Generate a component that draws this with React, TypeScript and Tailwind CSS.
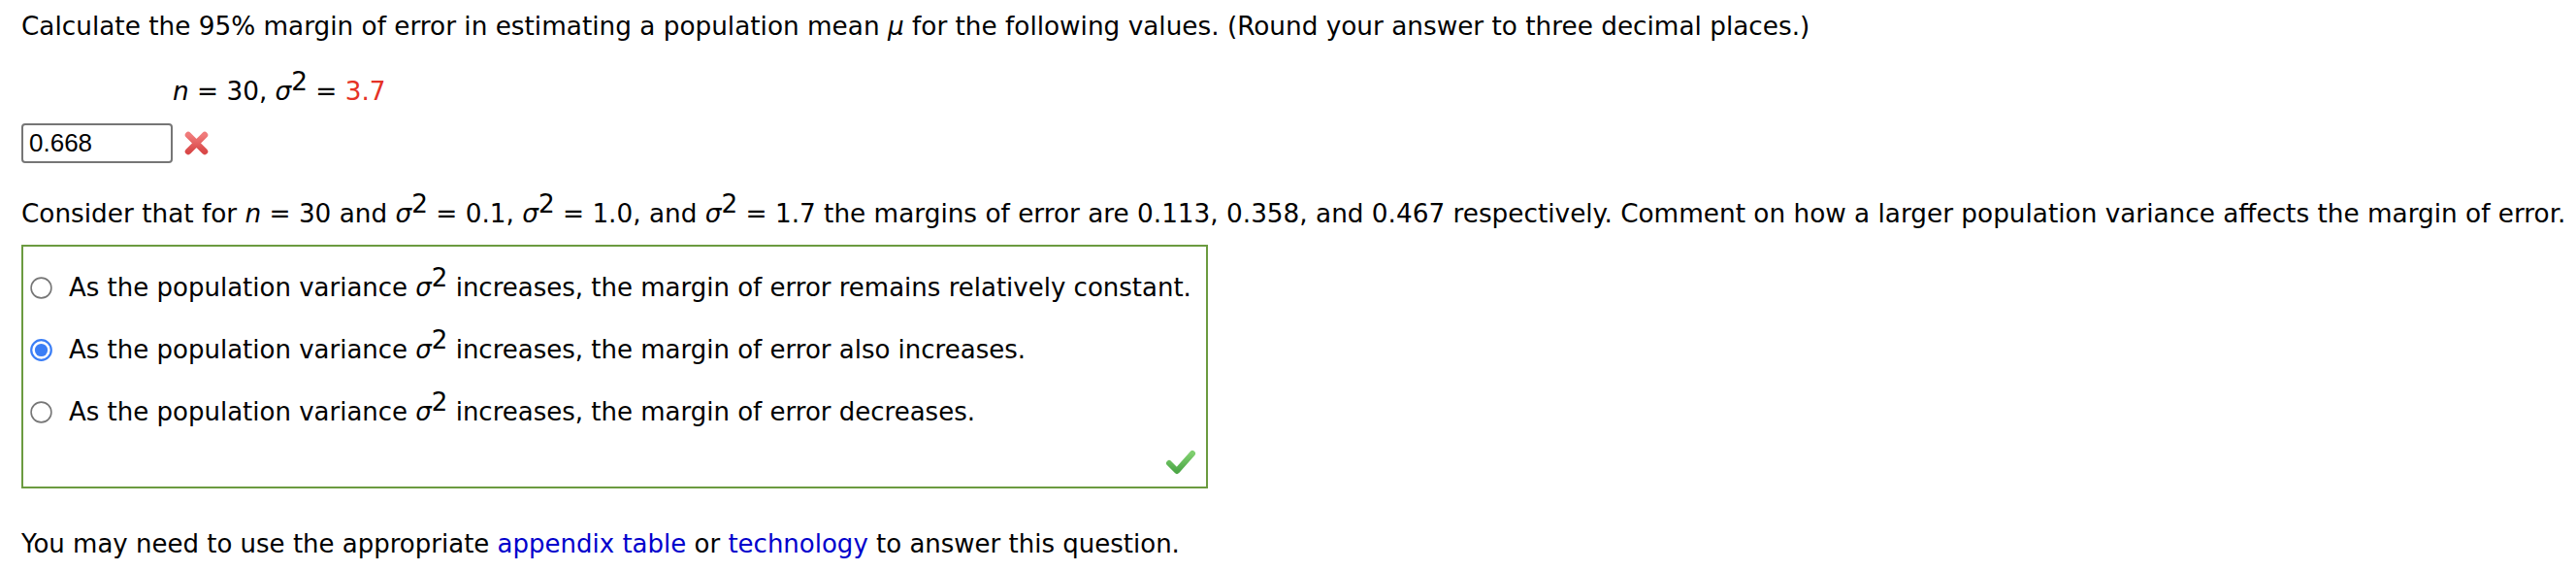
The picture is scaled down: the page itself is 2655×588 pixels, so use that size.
const font = { fontFamily: '"DejaVu Sans", Verdana, sans-serif' };

function Sigma() {
  return (
    <>
      <i>σ</i>
      <span className="align-[10px] leading-[0]">2</span>
    </>
  );
}

function Radio({ checked }: { checked?: boolean }) {
  if (checked) {
    return (
      <svg width="23" height="23" viewBox="0 0 23 23" className="shrink-0">
        <circle cx="11.5" cy="11.5" r="10.3" fill="#fff" stroke="#3b7ef6" strokeWidth="2.2" />
        <circle cx="11.5" cy="11.5" r="6.6" fill="#3b7ef6" />
      </svg>
    );
  }
  return (
    <svg width="23" height="23" viewBox="0 0 23 23" className="shrink-0">
      <circle cx="11.5" cy="11.5" r="10.4" fill="#fff" stroke="#767676" strokeWidth="1.6" />
    </svg>
  );
}

function WrongMark() {
  return (
    <svg width="27" height="27" viewBox="0 0 27 27">
      <defs>
        <linearGradient id="xg" x1="0" y1="0" x2="0" y2="1">
          <stop offset="0" stopColor="#f07b7b" />
          <stop offset="1" stopColor="#d94848" />
        </linearGradient>
      </defs>
      <path d="M5 5 L22 22 M22 5 L5 22" stroke="url(#xg)" strokeWidth="6.5" strokeLinecap="round" fill="none" />
    </svg>
  );
}

function RightMark() {
  return (
    <svg width="32" height="26" viewBox="0 0 32 26">
      <defs>
        <linearGradient id="cg" x1="0" y1="0" x2="0" y2="1">
          <stop offset="0" stopColor="#7fcf6f" />
          <stop offset="1" stopColor="#4ea848" />
        </linearGradient>
      </defs>
      <path d="M4 14 L12 22 L28 4" stroke="url(#cg)" strokeWidth="6" strokeLinecap="round" strokeLinejoin="round" fill="none" />
    </svg>
  );
}

const options = [
  { text: "increases, the margin of error remains relatively constant.", checked: false },
  { text: "increases, the margin of error also increases.", checked: true },
  { text: "increases, the margin of error decreases.", checked: false },
];

export default function App() {
  return (
    <div className="w-[2655px] h-[588px] bg-white text-black text-[26.3px] leading-[31px] pl-[22px] pt-[12px]" style={font}>
      <p className="whitespace-nowrap">
        Calculate the 95% margin of error in estimating a population mean <i>μ</i> for the following values. (Round
        your answer to three decimal places.)
      </p>

      <p className="mt-[36px] ml-[156px]">
        <i>n</i> = 30, <Sigma /> = <span className="text-[#e53226]">3.7</span>
      </p>

      <div className="mt-[17px] flex items-center gap-[11px]">
        <div
          className="w-[156px] h-[41px] border-2 border-[#767676] rounded-[4px] px-[6px] flex items-center text-[26px]"
          style={{ fontFamily: '"Liberation Sans", Arial, sans-serif' }}
        >
          0.668
        </div>
        <WrongMark />
      </div>

      <p className="mt-[37px] whitespace-nowrap">
        Consider that for <i>n</i> = 30 and <Sigma /> = 0.1, <Sigma /> = 1.0, and <Sigma /> = 1.7 the margins of error
        are 0.113, 0.358, and 0.467 respectively. Comment on how a larger population variance affects the margin of
        error.
      </p>

      <div className="mt-[16px] w-[1223px] h-[251px] border-2 border-[#6b9b40] pt-[27px] pl-[7px] pr-[10px] flex flex-col text-[26px]">
        <div className="flex flex-col gap-[33px]">
          {options.map((o, i) => (
            <div key={i} className="flex items-center gap-[17px]">
              <Radio checked={o.checked} />
              <span className="whitespace-nowrap">
                As the population variance <Sigma /> {o.text}
              </span>
            </div>
          ))}
        </div>
        <div className="mt-auto mb-[12px] flex justify-end">
          <RightMark />
        </div>
      </div>

      <p className="mt-[42px] text-[26px]">
        You may need to use the appropriate <span className="text-[#0000cc]">appendix table</span> or{" "}
        <span className="text-[#0000cc]">technology</span> to answer this question.
      </p>
    </div>
  );
}
